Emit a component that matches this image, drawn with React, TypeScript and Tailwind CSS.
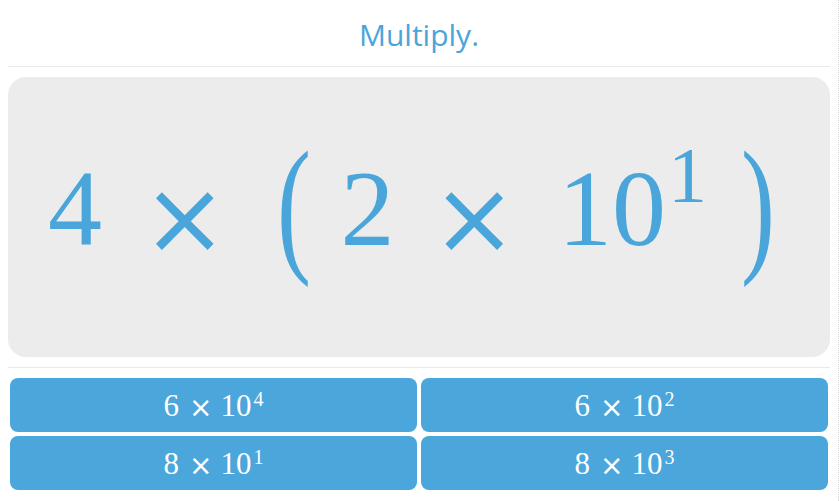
import React from "react";

const serif = { fontFamily: '"Liberation Serif", "Times New Roman", serif' };
const times = { fontFamily: '"DejaVu Sans", sans-serif' };

const choices = [
  { base: 6, exp: 4 },
  { base: 6, exp: 2 },
  { base: 8, exp: 1 },
  { base: 8, exp: 3 },
];

function Choice({ base, exp }: { base: number; exp: number }) {
  return (
    <button className="h-[54px] rounded-lg bg-[#4aa6db] text-white flex items-center justify-center">
      <span className="flex items-baseline text-[31px] leading-none" style={serif}>
        <span>{base}</span>
        <span className="ml-[10px] mr-[8px] text-[28px] relative top-[1px]" style={times}>
          ×
        </span>
        <span>10</span>
        <span className="ml-[2px] text-[20px] relative -top-[10px]" style={serif}>
          {exp}
        </span>
      </span>
    </button>
  );
}

export default function App() {
  return (
    <div className="w-[839px] h-[501px] bg-white border-r border-dotted border-[#d4d4d4]">
      <div className="px-[8px]">
        <header className="h-[67px] border-b border-[#e9e9e9] flex items-center justify-center">
          <h1
            className="text-[30px] text-[#4aa5da] pt-[3px]"
            style={{ fontFamily: '"Open Sans", sans-serif' }}
          >
            Multiply.
          </h1>
        </header>

        <div className="py-[10px] border-b border-[#e9e9e9]">
          <div className="h-[280px] rounded-[18px] bg-[#ececec] flex items-start pt-[42px] pl-[40px] text-[#4aa5da]">
            <div className="flex items-baseline text-[108px] leading-none" style={serif}>
              <span>4</span>
              <span className="ml-[40px] text-[102px] relative top-[8px]" style={times}>
                ×
              </span>
              <span className="ml-[42px] text-[150px] inline-block scale-x-[0.68] relative top-[10px]">(</span>
              <span className="ml-[21px]">2</span>
              <span className="ml-[37px] text-[102px] relative top-[8px]" style={times}>
                ×
              </span>
              <span className="ml-[41px]">10</span>
              <span className="ml-[2px] text-[78px] relative -top-[44px]">1</span>
              <span className="ml-[26px] text-[150px] inline-block scale-x-[0.68] relative top-[10px]">)</span>
            </div>
          </div>
        </div>

        <div className="grid grid-cols-2 gap-[4px] px-[2px] pt-[10px]">
          {choices.map((c, i) => (
            <Choice key={i} base={c.base} exp={c.exp} />
          ))}
        </div>
      </div>
    </div>
  );
}
